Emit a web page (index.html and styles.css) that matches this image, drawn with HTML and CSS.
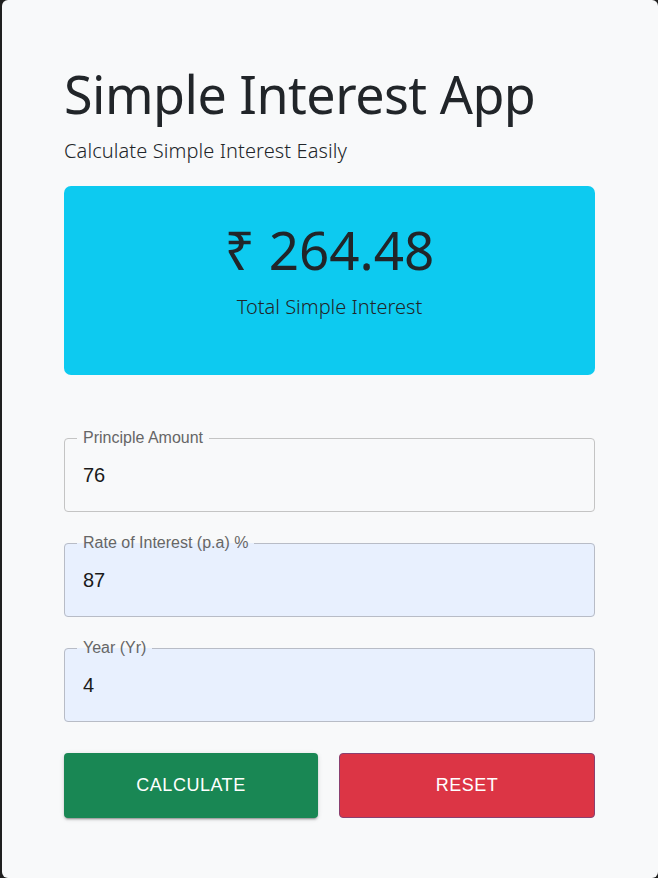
FILE: index.html
```html
<!DOCTYPE html>
<html lang="en">
<head>
<meta charset="utf-8">
<title>Simple Interest App</title>
<link rel="stylesheet" href="styles.css">
</head>
<body>
<div class="page">
  <main class="app">
    <h1 class="title">Simple Interest App</h1>
    <p class="lead">Calculate Simple Interest Easily</p>
    <section class="result">
      <div class="amount">₹ 264.48</div>
      <div class="caption">Total Simple Interest</div>
    </section>
    <form class="form">
      <fieldset class="field">
        <legend>Principle Amount</legend>
        <input type="text" value="76">
      </fieldset>
      <fieldset class="field filled">
        <legend>Rate of Interest (p.a) %</legend>
        <input type="text" value="87">
      </fieldset>
      <fieldset class="field filled">
        <legend>Year (Yr)</legend>
        <input type="text" value="4">
      </fieldset>
      <div class="actions">
        <button type="button" class="btn btn-calc">Calculate</button>
        <button type="button" class="btn btn-reset">Reset</button>
      </div>
    </form>
  </main>
</div>
</body>
</html>
```

FILE: styles.css
```css
html, body {
  margin: 0;
  padding: 0;
}
body {
  background: #1f1f1f;
}
.page {
  margin-left: 2px;
  min-height: 878px;
  background: #f8f9fa;
  border-radius: 6px;
  box-sizing: border-box;
  padding: 63px 63px 0 62px;
  font-family: "Noto Sans", "Open Sans", sans-serif;
  color: #212529;
}
.title {
  margin: 0;
  font-size: 52px;
  font-weight: 400;
  line-height: 1.2;
  letter-spacing: -0.5px;
}
.lead {
  margin: 11px 0 0 0;
  font-size: 20px;
  font-weight: 300;
  line-height: 1.5;
  letter-spacing: 0.1px;
}
.result {
  margin-top: 20px;
  background: #0dcaf0;
  border-radius: 7px;
  height: 189px;
  box-sizing: border-box;
  padding-top: 32px;
  text-align: center;
}
.amount {
  font-size: 53px;
  line-height: 1.2;
  font-weight: 400;
}
.caption {
  margin-top: 10px;
  font-size: 20px;
  font-weight: 300;
  line-height: 1.5;
}
.form {
  margin-top: 55px;
  display: flex;
  flex-direction: column;
  gap: 23px;
  font-family: "Liberation Sans", Arial, sans-serif;
}
.field {
  margin: 0;
  padding: 0 18px;
  border: 1px solid #c4c4c4;
  border-radius: 4px;
  min-width: 0;
}
.field.filled {
  background: #e8f0fe;
  border-color: #b8bcc6;
}
.field legend {
  font-size: 16px;
  line-height: 16px;
  color: #666666;
  padding: 0 6px;
  margin-left: -6px;
}
.field input {
  display: block;
  width: 100%;
  box-sizing: border-box;
  border: 0;
  outline: 0;
  background: transparent;
  font-family: "Liberation Sans", Arial, sans-serif;
  font-size: 20px;
  line-height: 24px;
  height: 24px;
  padding: 0;
  margin: 17px 0 24px 0;
  color: #1a1a1a;
}
.actions {
  margin-top: 8px;
  display: flex;
  gap: 21px;
}
.btn {
  flex: 1;
  height: 65px;
  border-radius: 4px;
  font-family: "Liberation Sans", Arial, sans-serif;
  font-size: 18px;
  font-weight: 400;
  letter-spacing: 0.02857em;
  text-transform: uppercase;
  color: #ffffff;
  cursor: pointer;
}
.btn-calc {
  background: #198754;
  border: 0;
  box-shadow: 0 3px 1px -2px rgba(0,0,0,0.2), 0 2px 2px 0 rgba(0,0,0,0.14), 0 1px 5px 0 rgba(0,0,0,0.12);
}
.btn-reset {
  background: #dc3545;
  border: 1px solid #8a4070;
}
```
